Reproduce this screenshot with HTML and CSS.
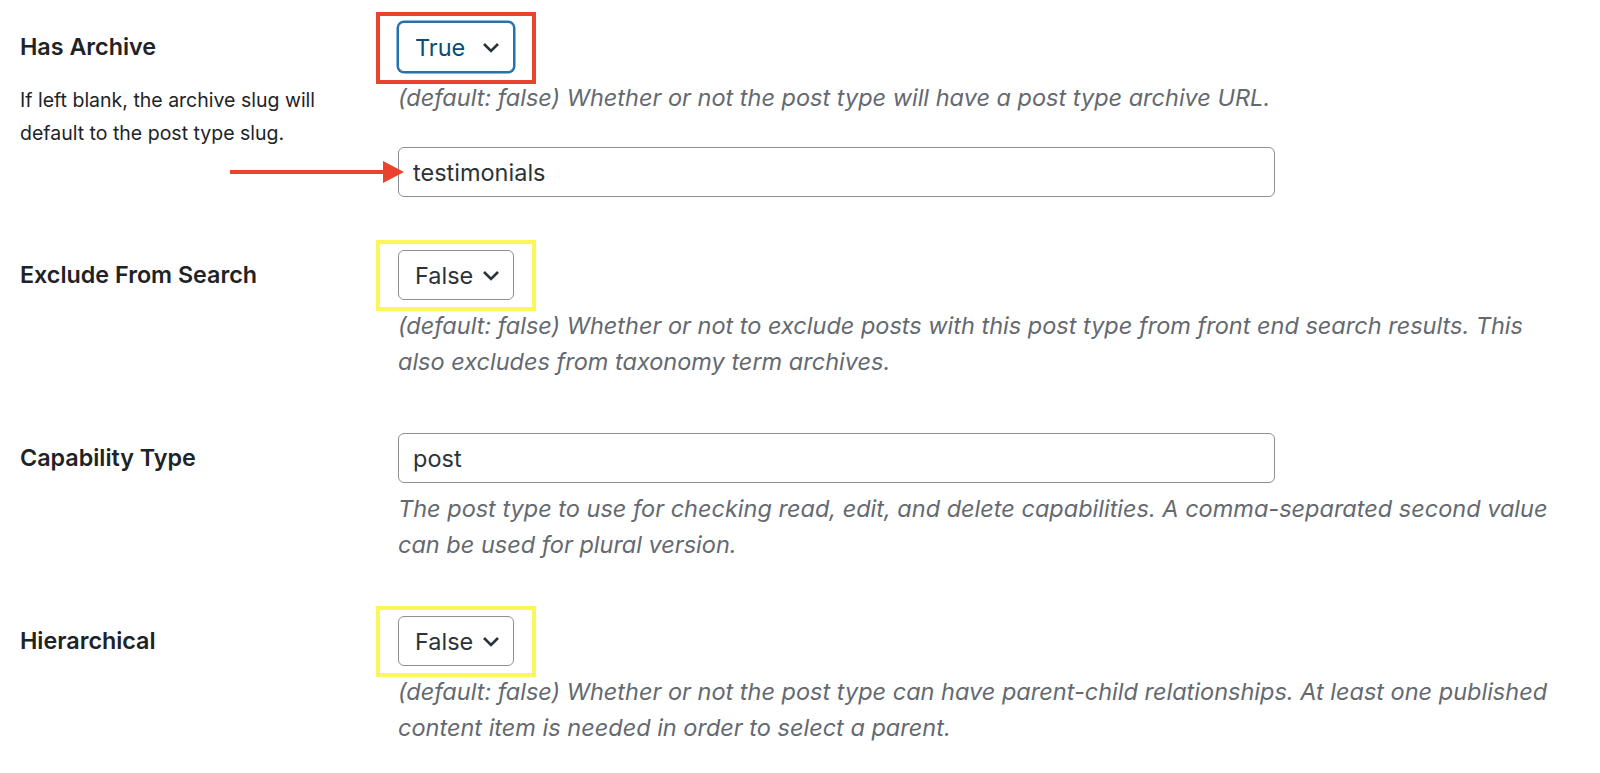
FILE: index.html
```html
<!DOCTYPE html>
<html lang="en">

<head>
  <meta charset="UTF-8">
  <meta name="viewport" content="width=device-width, initial-scale=1.0">
  <title>Edit Post Type</title>
  <link rel="stylesheet" href="styles.css">
</head>

<body>
  <div class="form-table">

    <div class="row">
      <div class="th">
        <label for="has_archive">Has Archive</label>
        <p class="th-desc">If left blank, the archive slug will default to the post type slug.</p>
      </div>
      <div class="td">
        <span class="mark mark-red">
          <span class="select focused" id="has_archive">
            <span>True</span>
            <svg class="chevron" width="18" height="11" viewBox="0 0 18 11"><path d="M2 2 L9 9 L16 2" /></svg>
          </span>
        </span>
        <p class="description">(default: false) Whether or not the post type will have a post type archive URL.</p>
        <div class="input-wrap">
          <svg class="arrow" width="174" height="22" viewBox="0 0 174 22">
            <rect x="0" y="9" width="156" height="4" />
            <polygon points="153,0 174,11 153,22" />
          </svg>
          <input class="text-input" type="text" value="testimonials">
        </div>
      </div>
    </div>

    <div class="row">
      <div class="th">
        <label for="exclude_from_search">Exclude From Search</label>
      </div>
      <div class="td">
        <span class="mark mark-yellow">
          <span class="select" id="exclude_from_search">
            <span>False</span>
            <svg class="chevron" width="18" height="11" viewBox="0 0 18 11"><path d="M2 2 L9 9 L16 2" /></svg>
          </span>
        </span>
        <p class="description">(default: false) Whether or not to exclude posts with this post type from front end search results. This also excludes from taxonomy term archives.</p>
      </div>
    </div>

    <div class="row">
      <div class="th">
        <label for="capability_type">Capability Type</label>
      </div>
      <div class="td">
        <input class="text-input" id="capability_type" type="text" value="post">
        <p class="description">The post type to use for checking read, edit, and delete capabilities. A comma-separated second value can be used for plural version.</p>
      </div>
    </div>

    <div class="row">
      <div class="th">
        <label for="hierarchical">Hierarchical</label>
      </div>
      <div class="td">
        <span class="mark mark-yellow">
          <span class="select" id="hierarchical">
            <span>False</span>
            <svg class="chevron" width="18" height="11" viewBox="0 0 18 11"><path d="M2 2 L9 9 L16 2" /></svg>
          </span>
        </span>
        <p class="description">(default: false) Whether or not the post type can have parent-child relationships. At least one published content item is needed in order to select a parent.</p>
      </div>
    </div>

  </div>
</body>
</html>
```

FILE: styles.css
```css
body {
  margin: 0;
  padding-top: 22px;
  background: #fff;
  color: #1d2327;
  font-family: Inter, "Liberation Sans", sans-serif;
}

.row {
  display: grid;
  grid-template-columns: 378px 1fr;
  padding: 0 0 53px 20px;
}

.th label {
  display: block;
  font-size: 23.3px;
  font-weight: 600;
  line-height: 50px;
  color: #1d2327;
}

.th-desc {
  width: 330px;
  margin: 12px 0 0;
  font-size: 19.5px;
  line-height: 33px;
  color: #1d2327;
}

.td {
  display: flex;
  flex-direction: column;
  align-items: flex-start;
}

.mark {
  display: inline-block;
  margin: -10px -22px -12px;
  padding: 6px 18px 8px;
  border: 4px solid;
}

.mark-red {
  border-color: #e9432e;
}

.mark-yellow {
  margin: -10px -22px -11px;
  padding: 6px 18px 7px;
  border-color: #fcf65b;
}

.select {
  box-sizing: border-box;
  width: 116px;
  height: 50px;
  padding: 0 13px 0 16px;
  display: flex;
  align-items: center;
  justify-content: space-between;
  border: 1.5px solid #8c8f94;
  border-radius: 6px;
  font-size: 23.5px;
  color: #2c3338;
  background: #fff;
}

.select.focused {
  border-color: #2271b1;
  box-shadow: 0 0 0 1.5px #2271b1;
  color: #0a4b78;
}

.chevron path {
  fill: none;
  stroke: #2c3338;
  stroke-width: 2.6;
}

.description {
  max-width: 1160px;
  margin: 8px 0 0;
  font-size: 23.5px;
  font-style: italic;
  line-height: 36px;
  color: #646970;
}

.input-wrap {
  position: relative;
  margin-top: 31px;
}

.text-input {
  box-sizing: border-box;
  display: block;
  width: 877px;
  height: 50px;
  margin: 0;
  padding: 0 14px;
  border: 1.5px solid #8c8f94;
  border-radius: 6px;
  font-family: inherit;
  font-size: 23.5px;
  color: #2c3338;
  background: #fff;
}

.arrow {
  position: absolute;
  left: -168px;
  top: 14px;
  fill: #e9432e;
}
```
